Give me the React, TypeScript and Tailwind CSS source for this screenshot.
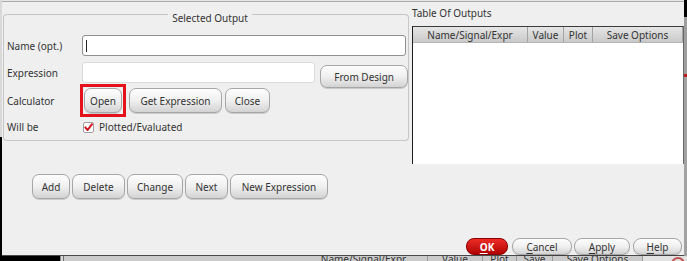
import React from "react";

const btn =
  "flex items-center justify-center rounded-[7px] border border-[#a6a6a6] bg-linear-to-b from-[#fdfdfd] via-[#f0f0f0] to-[#d3d3d3] text-[#333] shadow-[0_1px_0_rgba(0,0,0,0.15)] whitespace-nowrap";

function Btn({ cls, children }: { cls: string; children: React.ReactNode }) {
  return <div className={`${btn} ${cls}`}>{children}</div>;
}

function U({ children }: { children: React.ReactNode }) {
  return <span className="underline underline-offset-[2px] decoration-[1px]">{children}</span>;
}

export default function App() {
  return (
    <div className="w-[687px] h-[261px] overflow-hidden bg-black flex flex-col font-['Noto_Sans',sans-serif] text-[10px] leading-[14px] text-[#333]">
      {/* main row */}
      <div className="h-[256px] flex shrink-0">
        {/* left edge strip */}
        <div className="w-[2px] flex flex-col">
          <div className="h-[137px] bg-[#d9d9d9]" />
          <div className="flex-1 bg-black" />
        </div>

        {/* dialog */}
        <div className="w-[682px] flex flex-col">
          <div className="h-[1px] bg-[#e6e6e6]" />
          <div className="flex-1 flex flex-col bg-[#efefef] border-t border-b border-t-[#a9a9a9] border-b-[#4a4a4a]">
            {/* top part */}
            <div className="h-[162px] flex shrink-0">
              {/* left column: group */}
              <div className="w-[407px] shrink-0">
                <div className="ml-[1px] mt-[12px] w-[406px] h-[127px] flex flex-col">
                  <div className="h-[8px] flex">
                    <div className="w-[165px] border-t border-l border-[#c6c6c6] rounded-tl-[4px]" />
                    <div className="w-[84px] flex justify-center">
                      <span className="-mt-[3px] h-[14px] whitespace-nowrap">Selected Output</span>
                    </div>
                    <div className="flex-1 border-t border-r border-[#c6c6c6] rounded-tr-[4px]" />
                  </div>
                  <div className="flex-1 border-l border-r border-b border-[#c6c6c6] rounded-b-[4px] pl-[3px] pt-[13px] flex flex-col">
                    {/* Name row */}
                    <div className="h-[21px] flex items-center">
                      <div className="w-[75px] shrink-0">Name (opt.)</div>
                      <div className="w-[324px] h-[21px] bg-white border border-[#8f8f8f] rounded-[3px] flex items-center pl-[3px]">
                        <div className="w-[1px] h-[12px] bg-[#222]" />
                      </div>
                    </div>
                    {/* Expression row */}
                    <div className="mt-[6px] h-[26px] flex items-start">
                      <div className="w-[75px] shrink-0 h-[21px] flex items-center">Expression</div>
                      <div className="w-[234px] h-[21px] bg-white border border-[#dadada] rounded-[3px]" />
                      <Btn cls="ml-[5px] mt-[3px] w-[88px] h-[23px]">From Design</Btn>
                    </div>
                    {/* Calculator row */}
                    <div className="h-[25px] flex items-center">
                      <div className="w-[75px] shrink-0">Calculator</div>
                      <div className="relative ml-[2px]">
                        <Btn cls="w-[38px] h-[25px]">Open</Btn>
                        <div className="absolute -left-[4px] -top-[4px] -right-[4px] -bottom-[4px] border-[3px] border-[#e4111b]" />
                      </div>
                      <Btn cls="ml-[7px] w-[93px] h-[25px]">Get Expression</Btn>
                      <Btn cls="ml-[3px] w-[45px] h-[25px]">Close</Btn>
                    </div>
                    {/* Will be row */}
                    <div className="mt-[7px] h-[14px] flex items-center">
                      <div className="w-[76px] shrink-0">Will be</div>
                      <svg width="11" height="11" viewBox="0 0 11 11" className="shrink-0">
                        <rect x="0.5" y="0.5" width="10" height="10" rx="1.5" fill="#fff" stroke="#a0a0a0" />
                        <path d="M2.3 5.4 L4.6 8 L9 2.2" fill="none" stroke="#d3121a" strokeWidth="2" strokeLinecap="round" strokeLinejoin="round" />
                      </svg>
                      <span className="ml-[5px]">Plotted/Evaluated</span>
                    </div>
                  </div>
                </div>
              </div>

              {/* right column: table */}
              <div className="flex-1 pl-[3px] flex flex-col">
                <div className="mt-[4px] h-[14px]">Table Of Outputs</div>
                <div className="mt-[6px] w-[272px] h-[138px] flex flex-col border-l border-t border-r border-l-[#1e1e1e] border-t-[#3a3a3a] border-r-[#6a6a6a]">
                  <div className="h-[16px] flex bg-linear-to-b from-[#e6e6e6] to-[#c9c9c9] border-b border-[#b5b5b5]">
                    <div className="w-[115px] flex items-center justify-center border-r border-[#a3a3a3]">Name/Signal/Expr</div>
                    <div className="w-[36px] flex items-center justify-center border-r border-[#a3a3a3]">Value</div>
                    <div className="w-[29px] flex items-center justify-center border-r border-[#a3a3a3]">Plot</div>
                    <div className="flex-1 flex items-center justify-center border-r border-[#a3a3a3]">Save Options</div>
                  </div>
                  <div className="flex-1 bg-white" />
                </div>
              </div>
            </div>

            {/* action buttons */}
            <div className="mt-[10px] ml-[30px] h-[25px] flex gap-[2px]">
              <Btn cls="w-[38px] h-[25px]">Add</Btn>
              <Btn cls="w-[53px] h-[25px]">Delete</Btn>
              <Btn cls="w-[56px] h-[25px]">Change</Btn>
              <Btn cls="w-[43px] h-[25px]">Next</Btn>
              <Btn cls="w-[98px] h-[25px]">New Expression</Btn>
            </div>

            {/* bottom buttons */}
            <div className="mt-auto h-[17px] flex justify-end pr-[2px]">
              <div className="w-[42px] h-[17px] mr-[4px] flex items-center justify-center rounded-[8px] border border-[#8a0000] bg-linear-to-b from-[#ee2b26] to-[#b00000] text-white font-bold">
                <U>O</U>K
              </div>
              <Btn cls="w-[60px] h-[17px] mr-[2px] rounded-[8px]">
                <U>C</U>ancel
              </Btn>
              <Btn cls="w-[56px] h-[17px] mr-[3px] rounded-[8px]">
                <U>A</U>pply
              </Btn>
              <Btn cls="w-[49px] h-[17px] rounded-[8px]">
                <U>H</U>elp
              </Btn>
            </div>
          </div>
        </div>

        {/* right edge strip */}
        <div className="w-[3px] flex flex-col">
          <div className="h-[17px] bg-black" />
          <div className="h-[57px] bg-[#9e9e9e]" />
          <div className="h-[3px] bg-[#c21b1b]" />
          <div className="flex-1 bg-[#a2a2a2]" />
        </div>
      </div>

      {/* bottom strip: window behind */}
      <div className="h-[5px] flex overflow-hidden">
        <div className="w-[60px] bg-black" />
        <div className="w-[1px] bg-[#8a8a8a]" />
        <div className="w-[2px] bg-[#d8d8d8]" />
        <div className="w-[1px] bg-[#6f6f6f]" />
        <div className="w-[236px] bg-[#cbcbcb]" />
        <div className="w-[128px] bg-[#cbcbcb] flex justify-center border-r border-[#9a9a9a]">
          <span className="-mt-[4px] h-[14px] whitespace-nowrap">Name/Signal/Expr</span>
        </div>
        <div className="w-[55px] bg-[#cbcbcb] flex justify-center border-r border-[#9a9a9a]">
          <span className="-mt-[4px] h-[14px]">Value</span>
        </div>
        <div className="w-[34px] bg-[#cbcbcb] flex justify-center border-r border-[#9a9a9a]">
          <span className="-mt-[4px] h-[14px]">Plot</span>
        </div>
        <div className="w-[36px] bg-[#cbcbcb] flex justify-center border-r border-[#9a9a9a]">
          <span className="-mt-[4px] h-[14px]">Save</span>
        </div>
        <div className="w-[90px] bg-[#cbcbcb] flex justify-center border-r border-[#9a9a9a]">
          <span className="-mt-[4px] h-[14px] whitespace-nowrap">Save Options</span>
        </div>
        <div className="flex-1 bg-[#e2e2e2] flex justify-end pr-[2px]">
          <div className="w-[14px] h-[14px] rounded-full border-2 border-[#c0504d] mt-[1px]" />
        </div>
      </div>
    </div>
  );
}
